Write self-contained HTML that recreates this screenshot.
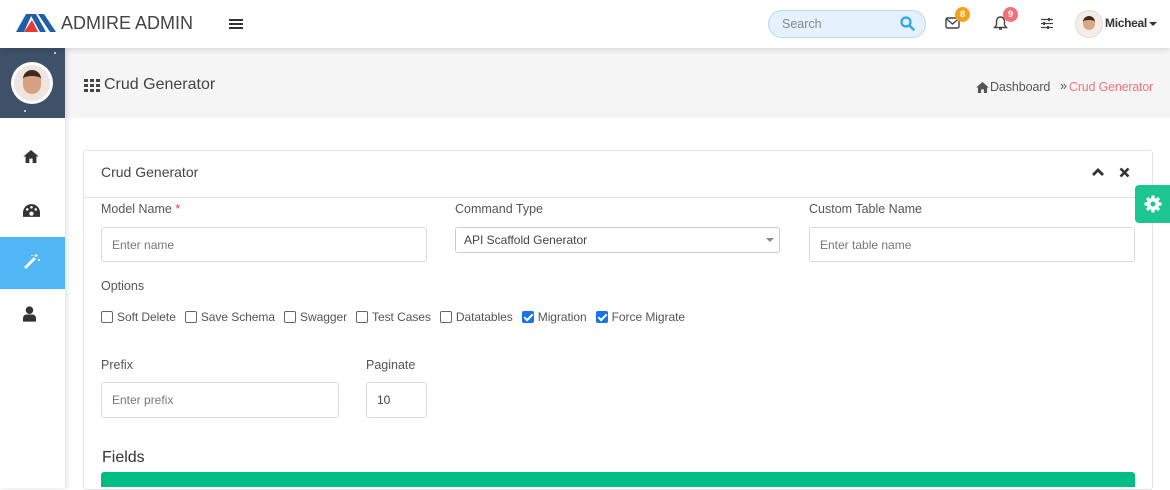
<!DOCTYPE html>
<html><head><meta charset="utf-8"><style>
*{box-sizing:border-box;margin:0;padding:0}
body{width:1170px;height:483px;overflow:hidden;background:#fff;font-family:"Liberation Sans",sans-serif;color:#555;font-size:13px;position:relative}
.abs{position:absolute}
.hdr{left:0;top:0;width:1170px;height:48px;background:#fff;box-shadow:0 2px 5px rgba(0,0,0,.12);z-index:5}
.side{left:0;top:48px;width:65px;height:440px;background:#fff;box-shadow:2px 0 5px rgba(0,0,0,.12);z-index:4}
.lbl{font-size:12.5px;color:#555}
.inp{border:1px solid #dcdcdc;border-radius:3px;background:#fff;font-size:12px;color:#777;padding-left:10px;display:flex;align-items:center}
.cb{display:inline-block;width:12px;height:12px;border:1px solid #666;border-radius:2px;vertical-align:-2px;margin-right:4px;background:#fff}
.cb.on{background:#1a73e8;border-color:#1a73e8;position:relative}
.cb.on:after{content:"";position:absolute;left:3px;top:0px;width:3px;height:7px;border:solid #fff;border-width:0 2px 2px 0;transform:rotate(45deg)}
.opt{margin-right:9px;font-size:12px;color:#555;letter-spacing:-0.05px}
</style></head><body>
<div class="abs hdr">
  <svg class="abs" style="left:16px;top:12px" width="40" height="20" viewBox="0 0 40 20"><path d="M0 20 L10 2 L16 2 L8 20Z" fill="#1e5fa8"/><path d="M8 20 L16 8 L22 20Z" fill="#e53935"/><path d="M14 2 L20 2 L30 20 L24 20Z" fill="#1e5fa8"/><path d="M22 2 L28 2 L40 20 L34 20Z" fill="#1e5fa8"/></svg>
  <div class="abs" style="left:61px;top:13px;font-size:18px;color:#444;letter-spacing:0px">ADMIRE ADMIN</div>
  <div class="abs" style="left:229px;top:19px;width:14px;height:2px;background:#333;box-shadow:0 4px 0 #333,0 8px 0 #333"></div>
  <div class="abs" style="left:768px;top:10px;width:158px;height:28px;border:1px solid #b6d8f5;background:#e5f1fd;border-radius:14px;font-size:12.5px;color:#888;padding:6px 13px">Search</div>
  <svg class="abs" style="left:900px;top:16px" width="15" height="15" viewBox="0 0 15 15"><circle cx="6" cy="6" r="4.5" fill="none" stroke="#2ea6f0" stroke-width="2.2"/><path d="M9.5 9.5 L13.5 13.5" stroke="#2ea6f0" stroke-width="2.4" stroke-linecap="round"/></svg>
  <svg class="abs" style="left:945px;top:17px" width="15" height="12" viewBox="0 0 15 12"><rect x="1" y="1" width="13" height="10" rx="1.5" fill="none" stroke="#444" stroke-width="1.4"/><path d="M1.5 2 L7.5 7 L13.5 2" fill="none" stroke="#444" stroke-width="1.4"/></svg>
  <div class="abs" style="left:955px;top:7px;width:15px;height:15px;border-radius:50%;background:#f7a11a;color:#fff;font-size:9px;font-weight:bold;text-align:center;line-height:15px">8</div>
  <svg class="abs" style="left:993px;top:15px" width="15" height="16" viewBox="0 0 15 16"><path d="M7.5 2 C4.5 2 3.5 4.5 3.5 7 L3.5 10 L1.5 12.5 L13.5 12.5 L11.5 10 L11.5 7 C11.5 4.5 10.5 2 7.5 2Z" fill="none" stroke="#444" stroke-width="1.4"/><path d="M6 14 L9 14" stroke="#444" stroke-width="1.6"/></svg>
  <div class="abs" style="left:1003px;top:7px;width:15px;height:15px;border-radius:50%;background:#f46f7c;color:#fff;font-size:9px;font-weight:bold;text-align:center;line-height:15px">9</div>
  <svg class="abs" style="left:1040px;top:17px" width="14" height="13" viewBox="0 0 14 13"><path d="M1 2.5H13M1 6.5H13M1 10.5H13" stroke="#444" stroke-width="1.3"/><rect x="8" y="1" width="2" height="3" fill="#444"/><rect x="3" y="5" width="2" height="3" fill="#444"/><rect x="7" y="9" width="2" height="3" fill="#444"/></svg>
  <div class="abs" style="left:1075px;top:10px;width:28px;height:28px;border-radius:50%;border:1px solid #ddd;background:#f4ede6;overflow:hidden"><div style="margin:5px auto 0;width:12px;height:14px;border-radius:6px;background:#d9a987;border-top:4px solid #3a2a22"></div></div>
  <div class="abs" style="left:1105px;top:16px;font-size:12px;font-weight:bold;color:#333;letter-spacing:-0.3px">Micheal</div>
  <div class="abs" style="left:1149px;top:22px;border:4px solid transparent;border-top:4px solid #333;border-bottom:0"></div>
</div>
<div class="abs side">
  <div style="height:70px;background:#3e5169;position:relative">
    <div class="abs" style="left:11px;top:14px;width:42px;height:42px;border-radius:50%;background:#fff;padding:3px"><div style="width:36px;height:36px;border-radius:50%;background:#eee5df;overflow:hidden"><div style="margin:5px auto 0;width:18px;height:24px;border-radius:9px;background:#d6a283;border-top:6px solid #3a2a22"></div></div></div>
    <div class="abs" style="left:54px;top:4px;width:2px;height:2px;background:#cfe;border-radius:50%"></div>
    <div class="abs" style="left:24px;top:62px;width:2px;height:2px;background:#cfe;border-radius:50%"></div>
  </div>
  <svg class="abs" style="left:23px;top:102px" width="16" height="13" viewBox="0 0 14 12"><path d="M7 0 L14 6 L12 6 L12 12 L8.5 12 L8.5 8 L5.5 8 L5.5 12 L2 12 L2 6 L0 6Z" fill="#333"/></svg>
  <svg class="abs" style="left:23px;top:156px" width="17" height="14" viewBox="0 0 16 13"><path d="M8 0 A8 8 0 0 1 16 8 L16 12 L0 12 L0 8 A8 8 0 0 1 8 0Z" fill="#333"/><circle cx="8" cy="9" r="2" fill="#fff"/><circle cx="4" cy="5" r="1.2" fill="#fff"/><circle cx="12" cy="5" r="1.2" fill="#fff"/><circle cx="8" cy="3" r="1.2" fill="#fff"/></svg>
  <div class="abs" style="left:0;top:189px;width:65px;height:52px;background:#51b6f5"></div>
  <svg class="abs" style="left:24px;top:205px" width="16" height="16" viewBox="0 0 16 16"><path d="M1 15 L11 5" stroke="#fff" stroke-width="2.8"/><path d="M12 1v3M10.5 2.5h3M15 6v2M14 7h2M8 2v1" stroke="#fff" stroke-width="1.2"/></svg>
  <svg class="abs" style="left:23px;top:258px" width="13" height="16" viewBox="0 0 12 14"><circle cx="6" cy="3.5" r="3.5" fill="#333"/><path d="M0 14 L0 11 C0 8.5 2 7.5 3.5 7.5 L8.5 7.5 C10 7.5 12 8.5 12 11 L12 14Z" fill="#333"/></svg>
</div>
<div class="abs" style="left:65px;top:48px;width:1105px;height:70px;background:#f5f5f5"></div>
<svg class="abs" style="left:84px;top:79px" width="16" height="13" viewBox="0 0 16 13"><g fill="#444"><rect x="0" y="0" width="4" height="3"/><rect x="6" y="0" width="4" height="3"/><rect x="12" y="0" width="4" height="3"/><rect x="0" y="5" width="4" height="3"/><rect x="6" y="5" width="4" height="3"/><rect x="12" y="5" width="4" height="3"/><rect x="0" y="10" width="4" height="3"/><rect x="6" y="10" width="4" height="3"/><rect x="12" y="10" width="4" height="3"/></g></svg>
<div class="abs" style="left:104px;top:76px;font-size:16px;color:#444">Crud Generator</div>
<svg class="abs" style="left:976px;top:82px" width="13" height="11" viewBox="0 0 14 12"><path d="M7 0 L14 6 L12 6 L12 12 L8.5 12 L8.5 8 L5.5 8 L5.5 12 L2 12 L2 6 L0 6Z" fill="#555"/></svg>
<div class="abs" style="left:990px;top:80px;font-size:12.5px;color:#555;letter-spacing:-0.1px">Dashboard</div>
<div class="abs" style="left:1060px;top:79px;font-size:12.5px;color:#555">»</div>
<div class="abs" style="left:1069px;top:80px;font-size:12.5px;color:#f0757a;letter-spacing:-0.2px">Crud Generator</div>
<div class="abs" style="left:83px;top:150px;width:1070px;height:340px;border:1px solid #e4e4e4;border-radius:3px"></div>
<div class="abs" style="left:84px;top:197px;width:1068px;height:1px;background:#e4e4e4"></div>
<div class="abs" style="left:101px;top:164px;font-size:14px;color:#444">Crud Generator</div>
<svg class="abs" style="left:1091px;top:167px" width="14" height="10" viewBox="0 0 14 10"><path d="M2 8 L7 3 L12 8" fill="none" stroke="#333" stroke-width="2.8"/></svg>
<svg class="abs" style="left:1119px;top:167px" width="11" height="11" viewBox="0 0 11 11"><path d="M1.5 1.5 L9.5 9.5 M9.5 1.5 L1.5 9.5" stroke="#333" stroke-width="2.6"/></svg>
<div class="abs" style="left:1135px;top:185px;width:35px;height:38px;background:#1dc591;border-radius:4px 0 0 4px"></div>
<svg class="abs" style="left:1144px;top:195px" width="18" height="18" viewBox="0 0 18 18"><g fill="#fff"><circle cx="9" cy="9" r="6"/><rect x="7.3" y="0.5" width="3.4" height="17" rx="1"/><rect x="0.5" y="7.3" width="17" height="3.4" rx="1"/><rect x="7.3" y="0.5" width="3.4" height="17" rx="1" transform="rotate(45 9 9)"/><rect x="7.3" y="0.5" width="3.4" height="17" rx="1" transform="rotate(-45 9 9)"/></g><circle cx="9" cy="9" r="2.5" fill="#1dc591"/></svg>
<div class="abs lbl" style="left:101px;top:202px">Model Name <span style="color:#e53935">*</span></div>
<div class="abs inp" style="left:101px;top:227px;width:326px;height:35px">Enter name</div>
<div class="abs lbl" style="left:455px;top:202px">Command Type</div>
<div class="abs inp" style="left:455px;top:227px;width:325px;height:26px;padding-left:8px;color:#444;border-color:#ccc">API Scaffold Generator</div>
<div class="abs" style="left:766px;top:238px;border:4px solid transparent;border-top:4px solid #888;border-bottom:0"></div>
<div class="abs lbl" style="left:809px;top:202px">Custom Table Name</div>
<div class="abs inp" style="left:809px;top:227px;width:326px;height:35px">Enter table name</div>
<div class="abs lbl" style="left:101px;top:279px">Options</div>
<div class="abs" style="left:101px;top:309px;white-space:nowrap">
<span class="opt"><span class="cb"></span>Soft Delete</span><span class="opt"><span class="cb"></span>Save Schema</span><span class="opt"><span class="cb"></span>Swagger</span><span class="opt"><span class="cb"></span>Test Cases</span><span class="opt"><span class="cb"></span>Datatables</span><span class="opt"><span class="cb on"></span>Migration</span><span class="opt"><span class="cb on"></span>Force Migrate</span>
</div>
<div class="abs lbl" style="left:101px;top:358px">Prefix</div>
<div class="abs inp" style="left:101px;top:382px;width:238px;height:36px">Enter prefix</div>
<div class="abs lbl" style="left:366px;top:358px">Paginate</div>
<div class="abs inp" style="left:366px;top:382px;width:61px;height:36px;color:#444">10</div>
<div class="abs" style="left:102px;top:449px;font-size:16px;color:#333">Fields</div>
<div class="abs" style="left:101px;top:472px;width:1034px;height:15px;background:#00bd86;border-radius:3px 3px 0 0"></div>
</body></html>
